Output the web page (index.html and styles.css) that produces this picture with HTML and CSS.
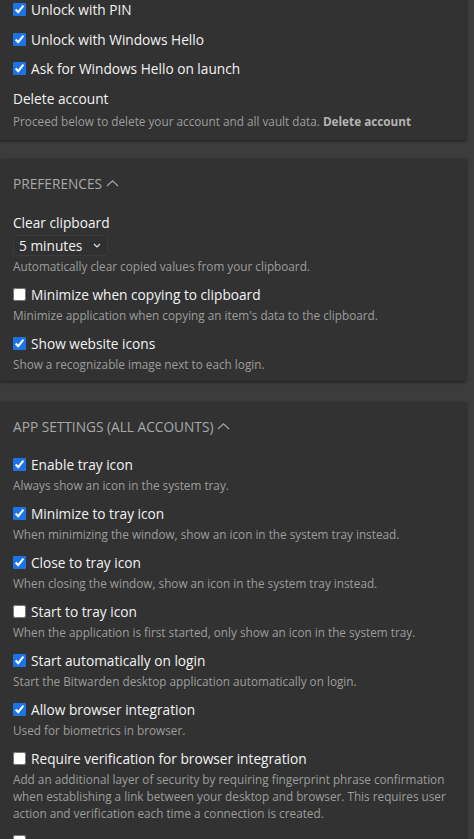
FILE: index.html
```html
<!DOCTYPE html>
<html lang="en">
<head>
<meta charset="utf-8">
<title>Settings</title>
<link rel="stylesheet" href="styles.css">
</head>
<body>
<div class="page">
  <section class="card card-cut">
    <label class="row"><input type="checkbox" checked><span>Unlock with PIN</span></label>
    <label class="row"><input type="checkbox" checked><span>Unlock with Windows Hello</span></label>
    <label class="row"><input type="checkbox" checked><span>Ask for Windows Hello on launch</span></label>
    <div class="row plain">Delete account</div>
    <p class="desc">Proceed below to delete your account and all vault data. <b>Delete account</b></p>
  </section>

  <section class="card">
    <h2 class="card-head">Preferences
      <svg class="chev" width="13" height="8" viewBox="0 0 13 8"><path d="M1 7 L6.5 1.8 L12 7" fill="none" stroke="currentColor" stroke-width="1.1"/></svg>
    </h2>
    <div class="item">
      <div class="row plain">Clear clipboard</div>
      <div class="select"><span>5 minutes</span>
        <svg width="8" height="5" viewBox="0 0 8 5"><path d="M1 1 L4 4 L7 1" fill="none" stroke="currentColor" stroke-width="1.2"/></svg>
      </div>
      <p class="desc first">Automatically clear copied values from your clipboard.</p>
    </div>
    <div class="item">
      <label class="row"><input type="checkbox"><span>Minimize when copying to clipboard</span></label>
      <p class="desc">Minimize application when copying an item's data to the clipboard.</p>
    </div>
    <div class="item">
      <label class="row"><input type="checkbox" checked><span>Show website icons</span></label>
      <p class="desc">Show a recognizable image next to each login.</p>
    </div>
  </section>

  <section class="card">
    <h2 class="card-head">App settings (all accounts)
      <svg class="chev" width="13" height="8" viewBox="0 0 13 8"><path d="M1 7 L6.5 1.8 L12 7" fill="none" stroke="currentColor" stroke-width="1.1"/></svg>
    </h2>
    <div class="item">
      <label class="row"><input type="checkbox" checked><span>Enable tray icon</span></label>
      <p class="desc">Always show an icon in the system tray.</p>
    </div>
    <div class="item">
      <label class="row"><input type="checkbox" checked><span>Minimize to tray icon</span></label>
      <p class="desc">When minimizing the window, show an icon in the system tray instead.</p>
    </div>
    <div class="item">
      <label class="row"><input type="checkbox" checked><span>Close to tray icon</span></label>
      <p class="desc">When closing the window, show an icon in the system tray instead.</p>
    </div>
    <div class="item">
      <label class="row"><input type="checkbox"><span>Start to tray icon</span></label>
      <p class="desc">When the application is first started, only show an icon in the system tray.</p>
    </div>
    <div class="item">
      <label class="row"><input type="checkbox" checked><span>Start automatically on login</span></label>
      <p class="desc">Start the Bitwarden desktop application automatically on login.</p>
    </div>
    <div class="item">
      <label class="row"><input type="checkbox" checked><span>Allow browser integration</span></label>
      <p class="desc">Used for biometrics in browser.</p>
    </div>
    <div class="item">
      <label class="row"><input type="checkbox"><span>Require verification for browser integration</span></label>
      <p class="desc">Add an additional layer of security by requiring fingerprint phrase confirmation when establishing a link between your desktop and browser. This requires user action and verification each time a connection is created.</p>
    </div>
    <div class="item">
      <label class="row"><input type="checkbox"></label>
    </div>
  </section>
</div>
</body>
</html>
```

FILE: styles.css
```css
html, body {
  margin: 0;
  padding: 0;
  background: #3c3c3c;
}
body {
  font-family: "Open Sans", "Noto Sans", sans-serif;
  color: #ececec;
  overflow: hidden;
}
.page {
  padding-right: 8px;
}
.card {
  background: #323232;
  box-shadow: 0 1px 3px rgba(0, 0, 0, 0.55);
  padding: 0 13px 1px;
  margin-bottom: 21px;
}
.card-cut {
  margin-top: -5px;
  padding-bottom: 10px;
  margin-bottom: 19px;
}
.row {
  display: flex;
  align-items: center;
  height: 29.5px;
  font-size: 13.7px;
  color: #f2f2f2;
}
.row input {
  margin: 0 5px 0 0;
  width: 13px;
  height: 13px;
  accent-color: #1a73e8;
}
.card-head {
  margin: 0;
  padding-top: 15px;
  height: 20px;
  line-height: 20px;
  margin-bottom: 15.5px;
  font-size: 13.7px;
  font-weight: 400;
  text-transform: uppercase;
  color: #a9a9a9;
  display: flex;
  align-items: center;
  gap: 4px;
}
.chev {
  color: #a9a9a9;
  margin-top: -2px;
}
.item {
  margin-bottom: 7px;
}
.item .row {
  height: 25px;
}
.desc {
  margin: 0;
  font-size: 11.75px;
  line-height: 17px;
  color: #9d9d9d;
}
.desc b {
  color: #b4b4b4;
  font-weight: 700;
}
.desc.first {
  margin-top: 2px;
}
.select {
  display: flex;
  align-items: center;
  justify-content: space-between;
  box-sizing: border-box;
  width: 95px;
  height: 21px;
  padding: 0 6px 0 5px;
  border: 1px solid #3b3b3b;
  border-radius: 2px;
  background: #303030;
  font-size: 13.7px;
  color: #f2f2f2;
}
.select svg {
  color: #e0e0e0;
}
```
